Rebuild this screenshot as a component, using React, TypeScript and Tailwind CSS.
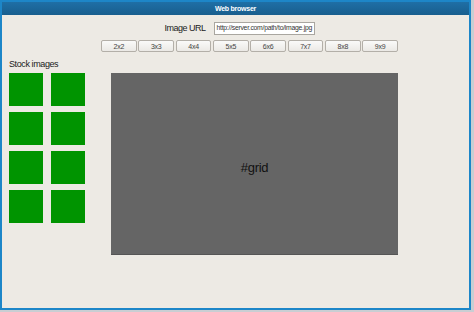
const sizes = ["2x2", "3x3", "4x4", "5x5", "6x6", "7x7", "8x8", "9x9"];

export default function App() {
  return (
    <div className="w-[474px] h-[312px] bg-[#c9ced3] font-['Liberation_Sans',Arial,sans-serif]">
      <div className="w-[471px] h-[310px] border-2 border-[#1d86c8] bg-[#edeae4] flex flex-col">
        {/* title bar */}
        <div className="h-[13px] bg-gradient-to-b from-[#1f6fa6] to-[#185e8e] flex items-center justify-center">
          <span className="text-[7px] font-bold text-white leading-none tracking-[-0.25px]">Web browser</span>
        </div>

        <div className="flex items-center justify-center gap-[8px] mt-[7px] pl-[8px]">
          <span className="text-[9px] text-[#222] leading-none tracking-[-0.5px]">Image URL</span>
          <div className="w-[101px] h-[13px] bg-white border border-[#a9a6a0] flex items-center px-[2px] overflow-hidden">
            <span className="text-[6.8px] text-[#333] leading-none whitespace-nowrap tracking-[-0.25px]">
              http://server.com/path/to/image.jpg
            </span>
          </div>
        </div>

        <div className="pl-[99px] mt-[5px]">
          <div className="w-[297px] grid grid-cols-8 gap-[1.5px]">
            {sizes.map((s) => (
              <button
                key={s}
                type="button"
                className="h-[12px] rounded-[2px] border border-[#b3afa8] bg-gradient-to-b from-[#fafaf9] to-[#ebe9e5] text-[7px] leading-none text-[#444] tracking-[-0.2px]"
              >
                {s}
              </button>
            ))}
          </div>
        </div>

        <div className="flex mt-[3px]">
          <div className="w-[109px] pl-[7px]">
            <div className="h-[18px] flex items-center">
              <span className="text-[9px] text-[#1a1a1a] leading-none tracking-[-0.4px]">Stock images</span>
            </div>
            <div className="grid grid-cols-[34px_34px] gap-x-[8px] gap-y-[6px]">
              {Array.from({ length: 8 }).map((_, i) => (
                <div key={i} className="h-[33px] bg-[#009400]" />
              ))}
            </div>
          </div>
          <div className="pt-[18px]">
            <div className="w-[287px] h-[182px] bg-[#656565] border-b border-[#555] flex items-center justify-center pt-[8px]">
              <span className="text-[13px] text-[#111] leading-none tracking-[-0.3px]">#grid</span>
            </div>
          </div>
        </div>
      </div>
    </div>
  );
}
